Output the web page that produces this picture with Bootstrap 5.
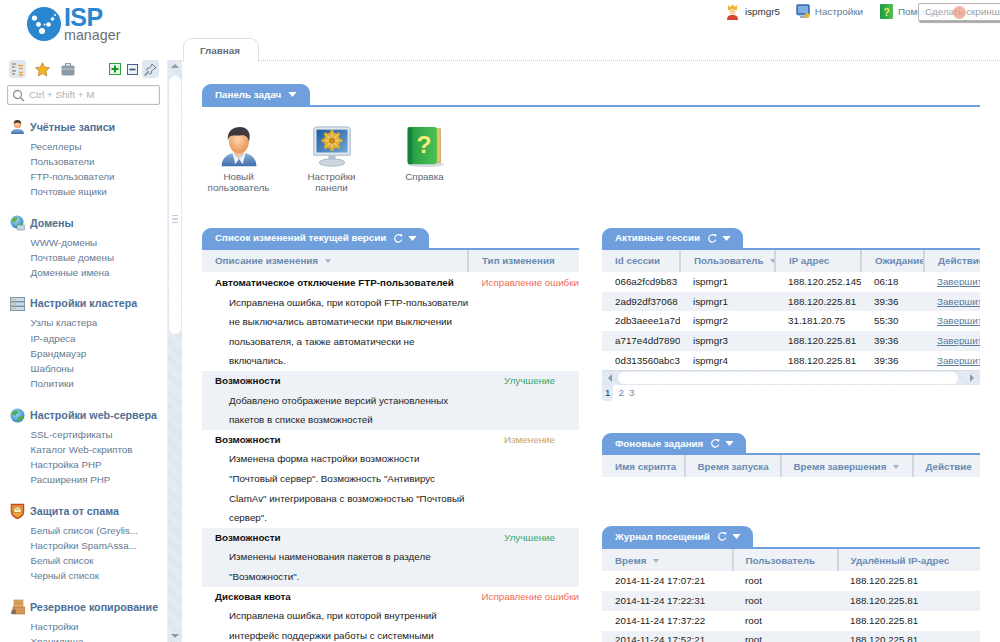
<!DOCTYPE html>
<html lang="ru">
<head>
<meta charset="utf-8">
<title>ISPmanager</title>
<link href="https://cdn.jsdelivr.net/npm/bootstrap@5.3.0/dist/css/bootstrap.min.css" rel="stylesheet">
<style>
html,body{height:642px;overflow:hidden;background:#fff}
body{font-family:"Liberation Sans",Arial,sans-serif;font-size:9.8px;color:#222;line-height:1.2}
.shell{height:642px;overflow:hidden}
.side{width:183px;flex:none;height:642px;overflow:hidden}
.logoarea{height:60px;padding:7px 0 0 27px}
.logotext{margin-left:3px;line-height:1}
.logo-isp{font-size:25px;font-weight:700;color:#2a86cf;line-height:20px;height:20px;letter-spacing:-.6px}
.logo-mgr{font-size:14.3px;color:#6a7075;line-height:16px}
.sidebody{height:582px}
.sideleft{width:167px;flex:none;overflow:hidden}
.tools{height:25px;padding-left:9px}
.toolbtn{width:17px;height:18px;border-radius:3px}
.toolbtn.on{background:#dfe7f0}
.tool-plus{margin-left:33px;height:18px}
.tool-minus{margin-left:6px;height:18px}
.tool-pin{margin-left:4px}
.searchbox{margin:0 7px;width:153px;height:20px;border:1px solid #bcbcbc;border-radius:2px;padding-left:4px;color:#aab2ba;box-shadow:inset 0 0 2px #ddd}
.menulist{padding-top:13px}
.mgroup{margin-bottom:14.9px}
.mhead{height:18px;padding-left:10px;font-size:10.7px;font-weight:700;color:#4d6f96;gap:5px;margin-bottom:2.5px;white-space:nowrap}
.mhead svg{flex:none}
.mitem{display:block;padding-left:30.5px;line-height:15.15px;color:#64798f;text-decoration:none;white-space:nowrap}
.vscroll{width:15px;flex:none;height:582px;position:relative;border-left:1px solid #e8eef4;background:#e3eaf2 repeating-linear-gradient(45deg,#dbe4ee 0 1px,#e8eef5 1px 2px)}
.vthumb{position:absolute;left:1px;right:1px;top:16px;height:258px;background:#fff;border-radius:6px}
.vgrip{position:absolute;left:3px;top:139px;width:6px;height:8px;border-top:1px solid #bcc8d4;border-bottom:1px solid #bcc8d4}
.vgrip:after{content:"";position:absolute;left:0;right:0;top:2px;height:2px;background:#cfd8e2}
.arr-u,.arr-d{position:absolute;left:3px;width:0;height:0;border-left:4px solid transparent;border-right:4px solid transparent}
.arr-u{top:4px;border-bottom:4px solid #8c9cae}
.arr-d{bottom:4px;border-top:4px solid #8c9cae}
.mainarea{flex:1;min-width:0;height:642px;overflow:hidden}
.topbar{height:38px;padding:3px 0 0 543px;position:relative}
.topit{gap:5px;height:17px;white-space:nowrap;margin-right:17px;color:#5b7b9b}
.topit.me{color:#333;gap:6px;margin-right:16px}
.shotbtn{position:absolute;right:0;top:3px;width:82px;height:18px;border:1px solid #b5b5b5;border-right:0;border-radius:2px 0 0 2px;background:rgba(255,255,255,.82);box-shadow:1px 2px 1px #aaa;color:#9aa0a6;padding:2px 0 0 6px;white-space:nowrap;overflow:hidden}
.shotdot{position:absolute;left:34px;top:2px;width:13px;height:13px;border-radius:50%;background:#ef9a86;opacity:.75}
.tabstrip{height:23px;border-bottom:1px dotted #b9cde3;position:relative}
.maintab{width:76px;height:24px;border:1px solid #d7e4ef;border-bottom:1px solid #fff;border-radius:9px 9px 0 0;background:#fff;font-weight:700;color:#5f6e7c;padding:6px 0 0 16px}
.wrap{padding:23px 20px 0 19px}
.ptab{display:inline-flex;align-items:center;gap:7px;height:20px;background:#6f9fdc;color:#fff;font-weight:700;border-radius:9px 9px 0 0;padding:0 12px 0 13px;white-space:nowrap}
.ptab svg+svg{margin-left:-3px}
.ptab-top{display:flex;width:108px;height:21px}
.ptab-tall{height:21px}
.pline{border-top:2px solid #6f9fdc}
.tasks{height:144px}
.taskcell{width:93px;text-align:center;color:#56697c;padding-top:19px;line-height:11px}
.taskcell svg{display:block;margin:0 auto 3px}
.taskrow{margin-left:-10px}
.cols{gap:23px;align-items:flex-start}
.colL{width:377px;flex:none}
.colR{width:378px;flex:none}
.gap1{margin-bottom:49px}
.gap2{margin-bottom:32px}
.gridt.table{table-layout:fixed;width:100%;margin:0;--bs-table-bg:transparent;font-size:9.8px;color:#222;white-space:nowrap}
.gridt.table>thead>tr>th{background:#eef2f6;color:#6b8bb2;font-weight:700;height:22px;padding:0 0 0 13px;border-bottom:0;border-right:2px solid #cfd6dd;overflow:hidden;vertical-align:middle;line-height:1}
.gridt.table>thead>tr>th:last-child{border-right:0}
.gridt.table>tbody>tr>td{padding:0 0 0 13px;height:19.7px;border:0;overflow:hidden;vertical-align:middle;line-height:1;background:transparent;box-shadow:none}
.gridt.table>tbody>tr.alt>td{background:#eef2f6}
.gridt.tight.table>thead>tr>th:not(:first-child){padding-left:11.5px}
.gridt.tight.table>tbody>tr>td:not(:first-child){padding-left:12px}
.sorta{display:inline-block;width:0;height:0;margin-left:4px;vertical-align:1px;border-left:3.5px solid transparent;border-right:3.5px solid transparent;border-top:4px solid #9fb3c9}
.gridt.table>tbody>tr>td.endlink{color:#5a7a9e;text-decoration:underline}
.chg-title{font-weight:700;color:#111;line-height:19.6px;white-space:nowrap}
.chg-line{padding-left:14px;line-height:19.6px;color:#222;white-space:nowrap}
.chgrow{display:flex}
.chgrow.alt{background:#eef2f6}
.chgfirst{margin-top:1px}
.chgbody{width:266px;flex:none;padding-left:13px}
.chgtype{flex:1;text-align:right;line-height:19.6px;white-space:nowrap}
.t-bug{color:#ef6e55}.t-imp{color:#3aa36b;padding-right:24px}.t-chg{color:#c9a26a;padding-right:24px}
.hscroll{height:15px;border-top:1px solid #d6dee7;position:relative;background:#e3eaf2 repeating-linear-gradient(45deg,#dbe4ee 0 1px,#e8eef5 1px 2px)}
.hthumb{position:absolute;left:16px;top:1px;width:340px;height:12px;background:#fff;border-radius:6px}
.arr-l,.arr-r{position:absolute;top:3px;width:0;height:0;border-top:4px solid transparent;border-bottom:4px solid transparent}
.arr-l{left:6px;border-right:4px solid #8c9cae}
.arr-r{right:6px;border-left:4px solid #8c9cae}
.pager{height:16px;gap:5px;color:#6c88a8}
.pager span{display:block;padding:2px 3px 0}
.pager .cur{background:#e3eaf1;color:#333;border-radius:0 0 4px 4px;height:16px}
.w-l1{width:266px}
.w-s1{width:78px}.w-s2{width:95px}.w-s3{width:86px}.w-s4{width:63px}
.w-b1{width:83px}.w-b2{width:96px}.w-b3{width:132px}
.w-j1{width:131px}.w-j2{width:105px}
</style>
</head>
<body>
<svg width="0" height="0" class="position-absolute">
<defs>
<linearGradient id="gBlue" x1="0" y1="0" x2="0" y2="1"><stop offset="0" stop-color="#8fb2dc"/><stop offset="1" stop-color="#3f6ea8"/></linearGradient>
<linearGradient id="gGreen" x1="0" y1="0" x2="1" y2="0"><stop offset="0" stop-color="#1f9a42"/><stop offset="1" stop-color="#4fc055"/></linearGradient>
<radialGradient id="gSkin" cx=".45" cy=".4" r=".7"><stop offset="0" stop-color="#fcd6ae"/><stop offset="1" stop-color="#e8884a"/></radialGradient>
<radialGradient id="gGear" cx=".5" cy=".5" r=".6"><stop offset="0" stop-color="#fff0a0"/><stop offset="1" stop-color="#d69a18"/></radialGradient>
<linearGradient id="gScreen" x1="0" y1="0" x2="1" y2="1"><stop offset="0" stop-color="#1f5c9e"/><stop offset="1" stop-color="#6fa6d8"/></linearGradient>
<radialGradient id="gGlobe" cx=".4" cy=".35" r=".7"><stop offset="0" stop-color="#a7dcf7"/><stop offset="1" stop-color="#2a7fc2"/></radialGradient>
<symbol id="refresh" viewBox="0 0 12 12"><path d="M9.6 7.2A4 4 0 1 1 8.6 3" fill="none" stroke="#fff" stroke-width="1.3"/><path d="M7.4 1.2l3 .4-.9 3z" fill="#fff"/></symbol>
<symbol id="caret" viewBox="0 0 10 6"><path d="M0 0h10L5 6z" fill="#fff"/></symbol>
</defs>
</svg>

<div class="shell d-flex">
  <aside class="side">
    <div class="logoarea d-flex align-items-start">
      <svg width="34" height="34" viewBox="0 0 34 34" class="flex-none"><circle cx="17" cy="17" r="17" fill="#2a86cf"/><g fill="#fff"><circle cx="7.5" cy="11" r="2.6"/><circle cx="11.5" cy="17.5" r="2.4"/><circle cx="15" cy="24" r="3"/><circle cx="21.5" cy="17.5" r="2.3"/><circle cx="25.5" cy="12" r="1.8"/><circle cx="28" cy="8" r="1.1"/><circle cx="17.5" cy="17.5" r="1"/></g></svg>
      <div class="logotext">
        <div class="logo-isp">ISP</div>
        <div class="logo-mgr">manager</div>
      </div>
    </div>
    <div class="sidebody d-flex">
      <div class="sideleft">
        <div class="tools d-flex align-items-start">
          <div class="toolbtn on d-flex align-items-center justify-content-center">
            <svg width="13" height="14" viewBox="0 0 13 14"><g fill="none" stroke-width="1.4"><path d="M1 2h4M1 5h3M1 9h4M1 12h3" stroke="#a09a7a"/><path d="M7 3.5h5M8 6.5h4M8 10.5h4M8 13h4" stroke="#e8a83a"/></g></svg>
          </div>
          <div class="toolbtn ms-2 d-flex align-items-center justify-content-center">
            <svg width="15" height="15" viewBox="0 0 20 20"><path d="M10 1l2.8 5.9 6.4.8-4.7 4.4 1.2 6.4L10 15.400l-5.700 3.100 1.200-6.400L.8 7.700l6.400-.8z" fill="#f0b429" stroke="#b97a1c"/></svg>
          </div>
          <div class="toolbtn d-flex align-items-center justify-content-center ms-2">
            <svg width="14" height="13" viewBox="0 0 14 13"><rect x="4.500" y="0.700" width="5" height="3" fill="none" stroke="#7d8c99"/><rect x=".5" y="2.500" width="13" height="10" rx="1.500" fill="#8c9ba8"/><path d="M1 6h12" stroke="#c3ccd4"/></svg>
          </div>
          <div class="d-flex align-items-center tool-plus">
            <svg width="12" height="12" viewBox="0 0 12 12"><rect x=".5" y=".5" width="11" height="11" fill="#e7f6e5" stroke="#23a33a"/><path d="M6 2.500v7M2.500 6h7" stroke="#1d8f33" stroke-width="2"/></svg>
          </div>
          <div class="d-flex align-items-center tool-minus">
            <svg width="11" height="11" viewBox="0 0 11 11"><rect x=".5" y=".5" width="10" height="10" fill="#eef2f8" stroke="#3f5f92"/><path d="M2.500 5.500h6" stroke="#2f4f82" stroke-width="1.600"/></svg>
          </div>
          <div class="toolbtn on d-flex align-items-center justify-content-center tool-pin">
            <svg width="13" height="13" viewBox="0 0 13 13"><path d="M8 1l4 4-2 .6-2.400 2.400-.2 2.400-1 1-2-2L1 12.500l-.4-.4L4 8.400l-2-2 1-1 2.400-.2L7.400 2.800z" fill="#dfe7f0" stroke="#5e6f80" stroke-width=".9"/></svg>
          </div>
        </div>
        <div class="searchbox d-flex align-items-center gap-1">
          <svg width="13" height="13" viewBox="0 0 13 13" class="flex-none"><circle cx="5.500" cy="5.500" r="4" fill="none" stroke="#8b949c" stroke-width="1.300"/><path d="M8.500 8.500L12 12" stroke="#8b949c" stroke-width="1.600"/></svg>
          <span>Ctrl + Shift + M</span>
        </div>
        <div class="menulist">
          <div class="mgroup">
            <div class="mhead d-flex align-items-center">
              <svg width="15" height="16" viewBox="0 0 15 16"><path d="M1 15c0-4 3-5 6.500-5s6.500 1 6.500 5z" fill="url(#gBlue)"/><circle cx="7.500" cy="5.500" r="3.600" fill="url(#gSkin)"/><path d="M3.800 5C3.500 1.500 6 1 7.500 1s4 .5 3.700 4C10 3.300 5 3.300 3.800 5z" fill="#4a3b30"/></svg>
              <span>Учётные записи</span>
            </div>
            <a class="mitem" href="#">Реселлеры</a>
            <a class="mitem" href="#">Пользователи</a>
            <a class="mitem" href="#">FTP-пользователи</a>
            <a class="mitem" href="#">Почтовые ящики</a>
          </div>
          <div class="mgroup">
            <div class="mhead d-flex align-items-center">
              <svg width="15" height="16" viewBox="0 0 15 16"><circle cx="7" cy="7" r="6.500" fill="url(#gGlobe)"/><path d="M2 4c2-2 4-2 5-1s-1 3-2 4-3 0-3-3zM8 9c2-1 4-1 5-1-1 3-3 5-5 5z" fill="#5fb845"/><rect x="7" y="10" width="8" height="5" rx="1" fill="#c9d6e2" stroke="#6f8396" stroke-width=".6"/></svg>
              <span>Домены</span>
            </div>
            <a class="mitem" href="#">WWW-домены</a>
            <a class="mitem" href="#">Почтовые домены</a>
            <a class="mitem" href="#">Доменные имена</a>
          </div>
          <div class="mgroup">
            <div class="mhead d-flex align-items-center">
              <svg width="15" height="14" viewBox="0 0 15 14"><rect width="15" height="14" fill="#7f95ac"/><g fill="#cfdae5"><rect x="1" y="1" width="13" height="3"/><rect x="1" y="5.500" width="13" height="3"/><rect x="1" y="10" width="13" height="3"/></g><g fill="#d9b765"><rect x="2" y="2" width="4" height="1"/><rect x="2" y="6.500" width="4" height="1"/><rect x="2" y="11" width="4" height="1"/></g></svg>
              <span>Настройки кластера</span>
            </div>
            <a class="mitem" href="#">Узлы кластера</a>
            <a class="mitem" href="#">IP-адреса</a>
            <a class="mitem" href="#">Брандмауэр</a>
            <a class="mitem" href="#">Шаблоны</a>
            <a class="mitem" href="#">Политики</a>
          </div>
          <div class="mgroup">
            <div class="mhead d-flex align-items-center">
              <svg width="15" height="15" viewBox="0 0 15 15"><circle cx="7.500" cy="7.500" r="7" fill="url(#gGlobe)"/><path d="M2 5c2-3 5-3 6-2s-1 3-2 4-3 1-4-2zM8 10c2-2 4-2 6-2-1 3-3 5-6 6z" fill="#4fb04a"/></svg>
              <span>Настройки web-сервера</span>
            </div>
            <a class="mitem" href="#">SSL-сертификаты</a>
            <a class="mitem" href="#">Каталог Web-скриптов</a>
            <a class="mitem" href="#">Настройка PHP</a>
            <a class="mitem" href="#">Расширения PHP</a>
          </div>
          <div class="mgroup">
            <div class="mhead d-flex align-items-center">
              <svg width="15" height="16" viewBox="0 0 15 16"><path d="M1.500 1.500h12V9c0 3-3 5-6 6.500-3-1.500-6-3.500-6-6.500z" fill="#e8a53a" stroke="#c9481f" stroke-width="1.500"/><rect x="4" y="4" width="7" height="5.500" fill="#fff3c0" stroke="#b76a1c" stroke-width=".7"/><path d="M4 4l3.500 3L11 4" fill="none" stroke="#b76a1c" stroke-width=".7"/></svg>
              <span>Защита от спама</span>
            </div>
            <a class="mitem" href="#">Белый список (Greylis...</a>
            <a class="mitem" href="#">Настройки SpamAssa...</a>
            <a class="mitem" href="#">Белый список</a>
            <a class="mitem" href="#">Черный список</a>
          </div>
          <div class="mgroup">
            <div class="mhead d-flex align-items-center">
              <svg width="15" height="16" viewBox="0 0 15 16"><rect x="4" y="1" width="9" height="8" fill="#e9b26c" stroke="#b67c3a" stroke-width=".6"/><path d="M5 3h7M5 5h7" stroke="#a66f30" stroke-width=".7"/><rect x="3" y="8" width="12" height="7" fill="#d49a55" stroke="#a66f30" stroke-width=".6"/><path d="M1 15c0-3 1-5 3-5s2 2 2 5z" fill="#8a6c58"/></svg>
              <span>Резервное копирование</span>
            </div>
            <a class="mitem" href="#">Настройки</a>
            <a class="mitem" href="#">Хранилища</a>
          </div>
        </div>
      </div>
      <div class="vscroll">
        <div class="arr-u"></div>
        <div class="vthumb"><div class="vgrip"></div></div>
        <div class="arr-d"></div>
      </div>
    </div>
  </aside>

  <main class="mainarea">
    <div class="topbar d-flex align-items-start">
      <div class="topit me d-flex align-items-center">
        <svg width="13" height="16" viewBox="0 0 13 16"><path d="M2 1l2 2 2.500-2.500L9 3l2-2v5H2z" fill="#eeb52e"/><circle cx="6.500" cy="7.500" r="3" fill="#f7cfa0"/><path d="M1 16c0-4 2-5 5.500-5s5.500 1 5.500 5z" fill="#d8452a"/></svg>
        <span>ispmgr5</span>
      </div>
      <div class="topit d-flex align-items-center">
        <svg width="14" height="15" viewBox="0 0 14 15"><rect x=".5" y=".5" width="13" height="10.500" rx="1.500" fill="#3f74b5" stroke="#6a8fbd"/><rect x="2" y="2" width="10" height="7" fill="#7fb0e0"/><rect x="4" y="12" width="6" height="2" fill="#9aabbd"/><circle cx="11" cy="11.500" r="2.500" fill="#e9b23a"/></svg>
        <span>Настройки</span>
      </div>
      <div class="topit d-flex align-items-center">
        <svg width="13" height="15" viewBox="0 0 13 15"><rect width="13" height="15" rx="1" fill="url(#gGreen)"/><text x="6.500" y="11.500" text-anchor="middle" font-family="Liberation Sans" font-size="10" font-weight="700" fill="#f5e96a">?</text></svg>
        <span>Помощь</span>
      </div>
      <div class="shotbtn"><span class="shotdot"></span>Сделать скриншот</div>
    </div>
    <div class="tabstrip"><div class="maintab">Главная</div></div>
    <div class="wrap">
      <div class="tasks">
        <div class="ptab ptab-top">Панель задач <svg width="9" height="5"><use href="#caret"/></svg></div>
        <div class="pline"></div>
        <div class="taskrow d-flex">
          <div class="taskcell">
            <svg width="42" height="42" viewBox="0 0 46 46"><path d="M4 44c0-11 9-15 19-15s19 4 19 15z" fill="url(#gBlue)"/><path d="M17 28l6 8 6-8z" fill="#f6c79b"/><path d="M15 27l8 9-4 6zM31 27l-8 9 4 6z" fill="#e9f0f7"/><ellipse cx="23" cy="17" rx="11" ry="13" fill="url(#gSkin)"/><path d="M11 17C9 5 17 1 24 1s13 5 10 16c-1-5-4-7-7-7-5 1-10 0-13 1-2 1-3 3-3 6z" fill="#3c3a3a"/></svg>
            Новый<br>пользователь
          </div>
          <div class="taskcell">
            <svg width="42" height="42" viewBox="0 0 46 46"><path d="M6 1h34a3 3 0 0 1 3 3v28H3V4a3 3 0 0 1 3-3z" fill="#dfe6ee" stroke="#9fb0c2"/><rect x="6" y="4" width="34" height="25" fill="url(#gScreen)"/><rect x="19" y="32" width="8" height="6" fill="#b7c3cf"/><ellipse cx="23" cy="40" rx="14" ry="4" fill="#cdd6df" stroke="#9fb0c2"/><g fill="url(#gGear)"><circle cx="23" cy="16" r="9"/><rect x="21" y="4.500" width="4" height="23" rx="1"/><rect x="11.500" y="14" width="23" height="4" rx="1"/><rect x="21" y="4.500" width="4" height="23" rx="1" transform="rotate(45 23 16)"/><rect x="21" y="4.500" width="4" height="23" rx="1" transform="rotate(-45 23 16)"/></g><circle cx="23" cy="16" r="3.500" fill="#c98a1a"/></svg>
            Настройки<br>панели
          </div>
          <div class="taskcell">
            <svg width="42" height="42" viewBox="0 0 46 46"><ellipse cx="24" cy="42" rx="20" ry="3" fill="#d6dbe0"/><path d="M35 3h5v37h-5z" fill="#e2c26a" stroke="#b1923a" stroke-width=".6"/><rect x="4" y="1" width="32" height="41" rx="3" fill="url(#gGreen)"/><rect x="4" y="1" width="5" height="41" rx="2" fill="#15843a"/><text x="22" y="30" text-anchor="middle" font-family="Liberation Sans" font-size="27" font-weight="700" fill="#f4ee78">?</text></svg>
            Справка
          </div>
        </div>
      </div>
      <div class="cols d-flex">
        <div class="colL">
          <div class="ptab">Список изменений текущей версии <svg width="11" height="11"><use href="#refresh"/></svg><svg width="9" height="5"><use href="#caret"/></svg></div>
          <div class="pline"></div>
          <table class="table gridt">
            <colgroup><col class="w-l1"><col></colgroup>
            <thead><tr><th>Описание изменения <span class="sorta"></span></th><th>Тип изменения</th></tr></thead>
          </table>
          <div class="chgrow chgfirst">
            <div class="chgbody">
              <div class="chg-title">Автоматическое отключение FTP-пользователей</div>
              <div class="chg-line">Исправлена ошибка, при которой FTP-пользователи</div>
              <div class="chg-line">не выключались автоматически при выключении</div>
              <div class="chg-line">пользователя, а также автоматически не</div>
              <div class="chg-line">включались.</div>
            </div>
            <div class="chgtype t-bug">Исправление ошибки</div>
          </div>
          <div class="chgrow alt">
            <div class="chgbody">
              <div class="chg-title">Возможности</div>
              <div class="chg-line">Добавлено отображение версий установленных</div>
              <div class="chg-line">пакетов в списке возможностей</div>
            </div>
            <div class="chgtype t-imp">Улучшение</div>
          </div>
          <div class="chgrow">
            <div class="chgbody">
              <div class="chg-title">Возможности</div>
              <div class="chg-line">Изменена форма настройки возможности</div>
              <div class="chg-line">"Почтовый сервер". Возможность "Антивирус</div>
              <div class="chg-line">ClamAv" интегрирована с возможностью "Почтовый</div>
              <div class="chg-line">сервер".</div>
            </div>
            <div class="chgtype t-chg">Изменение</div>
          </div>
          <div class="chgrow alt">
            <div class="chgbody">
              <div class="chg-title">Возможности</div>
              <div class="chg-line">Изменены наименования пакетов в разделе</div>
              <div class="chg-line">"Возможности".</div>
            </div>
            <div class="chgtype t-imp">Улучшение</div>
          </div>
          <div class="chgrow">
            <div class="chgbody">
              <div class="chg-title">Дисковая квота</div>
              <div class="chg-line">Исправлена ошибка, при которой внутренний</div>
              <div class="chg-line">интерфейс поддержки работы с системными</div>
            </div>
            <div class="chgtype t-bug">Исправление ошибки</div>
          </div>
        </div>
        <div class="colR">
          <div class="ptab">Активные сессии <svg width="11" height="11"><use href="#refresh"/></svg><svg width="9" height="5"><use href="#caret"/></svg></div>
          <div class="pline"></div>
          <table class="table gridt">
            <colgroup><col class="w-s1"><col class="w-s2"><col class="w-s3"><col class="w-s4"><col></colgroup>
            <thead><tr><th>Id сессии</th><th>Пользователь <span class="sorta"></span></th><th>IP адрес</th><th>Ожидание</th><th>Действие</th></tr></thead>
            <tbody>
              <tr><td>066a2fcd9b83</td><td>ispmgr1</td><td>188.120.252.145</td><td>06:18</td><td class="endlink">Завершить</td></tr>
              <tr class="alt"><td>2ad92df37068</td><td>ispmgr1</td><td>188.120.225.81</td><td>39:36</td><td class="endlink">Завершить</td></tr>
              <tr><td>2db3aeee1a7d</td><td>ispmgr2</td><td>31.181.20.75</td><td>55:30</td><td class="endlink">Завершить</td></tr>
              <tr class="alt"><td>a717e4dd7890</td><td>ispmgr3</td><td>188.120.225.81</td><td>39:36</td><td class="endlink">Завершить</td></tr>
              <tr><td>0d313560abc3</td><td>ispmgr4</td><td>188.120.225.81</td><td>39:36</td><td class="endlink">Завершить</td></tr>
            </tbody>
          </table>
          <div class="hscroll"><div class="arr-l"></div><div class="hthumb"></div><div class="arr-r"></div></div>
          <div class="pager d-flex"><span class="cur">1</span><span class="px-0">2</span><span class="px-0">3</span></div>
          <div class="gap2"></div>
          <div class="ptab">Фоновые задания <svg width="11" height="11"><use href="#refresh"/></svg><svg width="9" height="5"><use href="#caret"/></svg></div>
          <div class="pline"></div>
          <table class="table gridt tight">
            <colgroup><col class="w-b1"><col class="w-b2"><col class="w-b3"><col></colgroup>
            <thead><tr><th>Имя скрипта</th><th>Время запуска</th><th>Время завершения <span class="sorta"></span></th><th>Действие</th></tr></thead>
          </table>
          <div class="gap1"></div>
          <div class="ptab ptab-tall">Журнал посещений <svg width="11" height="11"><use href="#refresh"/></svg><svg width="9" height="5"><use href="#caret"/></svg></div>
          <div class="pline"></div>
          <table class="table gridt tight">
            <colgroup><col class="w-j1"><col class="w-j2"><col></colgroup>
            <thead><tr><th>Время <span class="sorta"></span></th><th>Пользователь</th><th>Удалённый IP-адрес</th></tr></thead>
            <tbody>
              <tr><td>2014-11-24 17:07:21</td><td>root</td><td>188.120.225.81</td></tr>
              <tr class="alt"><td>2014-11-24 17:22:31</td><td>root</td><td>188.120.225.81</td></tr>
              <tr><td>2014-11-24 17:37:22</td><td>root</td><td>188.120.225.81</td></tr>
              <tr class="alt"><td>2014-11-24 17:52:21</td><td>root</td><td>188.120.225.81</td></tr>
            </tbody>
          </table>
        </div>
      </div>
    </div>
  </main>
</div>
<script src="https://cdn.jsdelivr.net/npm/bootstrap@5.3.0/dist/js/bootstrap.bundle.min.js"></script>
</body>
</html>
